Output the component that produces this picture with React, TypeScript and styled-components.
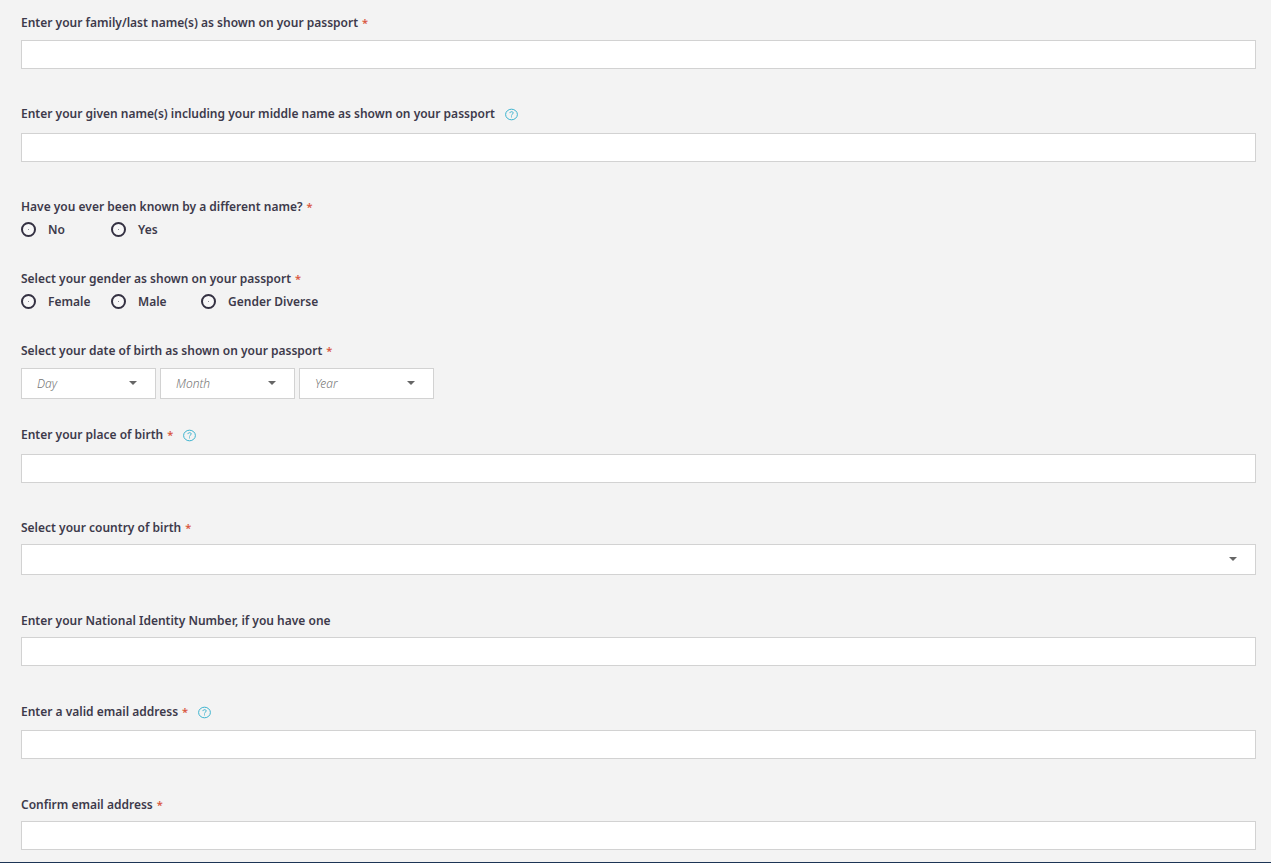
import React, { useId } from "react";
import styled, { createGlobalStyle } from "styled-components";

const GlobalStyle = createGlobalStyle`
  *, *::before, *::after { box-sizing: border-box; }
  body {
    margin: 0;
    background: #f3f3f3;
    color: #3d3a4b;
    font-family: "Noto Sans", "Open Sans", sans-serif;
    font-size: 12px;
    line-height: 18px;
  }
`;

const Form = styled.form`
  display: flex;
  flex-direction: column;
  padding: 14px 15px 12px 21px;
  border-bottom: 1px solid #1c3556;
`;

const Field = styled.div<{ $gap?: number; $after?: number }>`
  display: flex;
  flex-direction: column;
  gap: ${(p) => p.$gap ?? 8}px;
  margin-bottom: ${(p) => p.$after ?? 36}px;

  &:last-child { margin-bottom: 0; }
`;

const Group = styled.fieldset<{ $after: number }>`
  min-width: 0;
  margin: 0 0 ${(p) => p.$after}px;
  padding: 0;
  border: 0;
`;

const Legend = styled.legend<{ $gap: number }>`
  padding: 0 0 ${(p) => p.$gap}px;
  font-weight: 600;
`;

const LabelRow = styled.div<{ $help?: boolean }>`
  display: flex;
  align-items: flex-start;
  gap: 10px;
  height: ${(p) => (p.$help ? 20 : 18)}px;
`;

const Label = styled.label`
  font-weight: 600;
`;

const Star = styled.span`
  margin-left: 4px;
  color: #d9573f;
  font-size: 11px;
`;

const HelpButton = styled.button`
  display: flex;
  width: 13px;
  height: 13px;
  margin-top: 3px;
  padding: 0;
  border: 0;
  background: none;
  color: #3bb3cf;
  cursor: pointer;
`;

const TextInput = styled.input`
  width: 100%;
  height: 29px;
  padding: 0 15px;
  border: 1px solid #d2d2d2;
  border-radius: 0;
  background: #fff;
  color: inherit;
  font: inherit;
`;

const Options = styled.div`
  display: flex;
  flex-wrap: wrap;
`;

const Option = styled.label`
  display: flex;
  align-items: flex-start;
  gap: 12px;
  min-width: 90px;
  font-weight: 600;
`;

const Radio = styled.input`
  display: grid;
  place-items: center;
  appearance: none;
  width: 15px;
  height: 15px;
  margin: 1px 0 0;
  border: 2px solid #343142;
  border-radius: 50%;
  background: #f8f8f8;

  &::after {
    content: "";
    width: 1px;
    height: 1px;
    background: #8d8b95;
  }
  &:checked::after {
    width: 7px;
    height: 7px;
    border-radius: 50%;
    background: #343142;
  }
`;

const Dates = styled.div`
  display: flex;
  gap: 4px;
`;

const SelectBox = styled.div<{ $width: string }>`
  position: relative;
  width: ${(p) => p.$width};
`;

const Select = styled.select`
  display: block;
  appearance: none;
  width: 100%;
  height: 31px;
  padding: 0 34px 0 15px;
  border: 1px solid #d2d2d2;
  border-radius: 0;
  background: #fff;
  color: #777;
  font: italic 300 12px/18px "Noto Sans", "Open Sans", sans-serif;
`;

const Arrow = styled.svg`
  position: absolute;
  top: 13px;
  right: 19px;
  pointer-events: none;
`;

function Help() {
  return (
    <HelpButton type="button" aria-label="Help">
      <svg width="13" height="13" viewBox="0 0 13 13" fill="none" stroke="currentColor">
        <ellipse cx="6.5" cy="6.5" rx="5.9" ry="5.3" />
        <path d="M4.9 5.1C5 4.1 5.7 3.7 6.6 3.7C7.6 3.7 8.2 4.2 8.2 5C8.2 6.1 6.6 6.1 6.5 7.5M6.5 8.4V9.4" />
      </svg>
    </HelpButton>
  );
}

type DropdownProps = {
  id?: string;
  width: string;
  placeholder?: string;
  options: (string | number)[];
};

function Dropdown({ id, width, placeholder = "", options }: DropdownProps) {
  return (
    <SelectBox $width={width}>
      <Select id={id} aria-label={placeholder || undefined} defaultValue="">
        <option value="">{placeholder}</option>
        {options.map((o) => (
          <option key={o}>{o}</option>
        ))}
      </Select>
      <Arrow width="8" height="4" viewBox="0 0 8 4" fill="#666" aria-hidden="true">
        <path d="M0 0H8L4 4Z" />
      </Arrow>
    </SelectBox>
  );
}

type FieldProps = {
  label: string;
  required?: boolean;
  help?: boolean;
  type?: string;
  gap?: number;
  after?: number;
  countries?: string[];
};

function FormField({ label, required, help, type = "text", gap, after, countries }: FieldProps) {
  const id = useId();
  return (
    <Field $gap={gap} $after={after}>
      <LabelRow $help={help}>
        <Label htmlFor={id}>
          {label}
          {required && <Star>*</Star>}
        </Label>
        {help && <Help />}
      </LabelRow>
      {countries ? (
        <Dropdown id={id} width="100%" options={countries} />
      ) : (
        <TextInput id={id} type={type} required={required} />
      )}
    </Field>
  );
}

function RadioGroup({ label, name, options }: { label: string; name: string; options: string[] }) {
  return (
    <Group $after={31}>
      <Legend $gap={5}>
        {label}
        <Star>*</Star>
      </Legend>
      <Options>
        {options.map((o) => (
          <Option key={o}>
            <Radio type="radio" name={name} value={o} />
            {o}
          </Option>
        ))}
      </Options>
    </Group>
  );
}

const range = (from: number, count: number) => Array.from({ length: count }, (_, i) => from + i);
const months = ["January", "February", "March", "April", "May", "June", "July", "August", "September", "October", "November", "December"];

export default function App() {
  return (
    <>
      <GlobalStyle />
      <Form>
        <FormField label="Enter your family/last name(s) as shown on your passport" required />
        <FormField label="Enter your given name(s) including your middle name as shown on your passport" help />
        <RadioGroup label="Have you ever been known by a different name?" name="otherName" options={["No", "Yes"]} />
        <RadioGroup label="Select your gender as shown on your passport" name="gender" options={["Female", "Male", "Gender Diverse"]} />
        <Group $after={27}>
          <Legend $gap={8}>
            Select your date of birth as shown on your passport
            <Star>*</Star>
          </Legend>
          <Dates>
            <Dropdown width="135px" placeholder="Day" options={range(1, 31)} />
            <Dropdown width="135px" placeholder="Month" options={months} />
            <Dropdown width="135px" placeholder="Year" options={range(1930, 90)} />
          </Dates>
        </Group>
        <FormField label="Enter your place of birth" required help />
        <FormField label="Select your country of birth" required gap={7} after={37} countries={["Australia", "India", "New Zealand"]} />
        <FormField label="Enter your National Identity Number, if you have one" gap={7} after={37} />
        <FormField label="Enter a valid email address" type="email" required help gap={7} after={37} />
        <FormField label="Confirm email address" type="email" required gap={7} />
      </Form>
    </>
  );
}
